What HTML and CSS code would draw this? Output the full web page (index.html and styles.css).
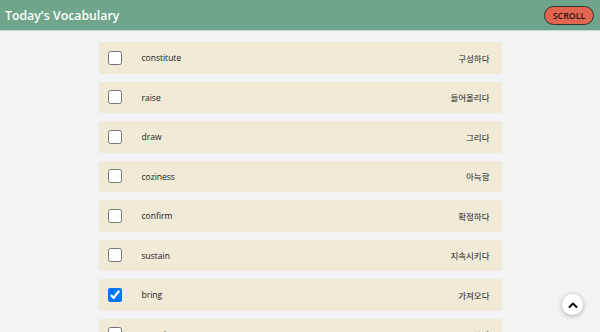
FILE: index.html
```html
<!DOCTYPE html>
<html lang="en">
<head>
<meta charset="utf-8">
<title>Today's Vocabulary</title>
<link rel="stylesheet" href="styles.css">
</head>
<body>
<header class="topbar">
  <h1 class="title">Today's Vocabulary</h1>
  <button class="scroll-btn">SCROLL</button>
</header>
<main class="list">
  <div class="item"><input type="checkbox" class="check"><span class="word">constitute</span><span class="meaning">구성하다</span></div>
  <div class="item"><input type="checkbox" class="check"><span class="word">raise</span><span class="meaning">들어올리다</span></div>
  <div class="item"><input type="checkbox" class="check"><span class="word">draw</span><span class="meaning">그리다</span></div>
  <div class="item"><input type="checkbox" class="check"><span class="word">coziness</span><span class="meaning">아늑함</span></div>
  <div class="item"><input type="checkbox" class="check"><span class="word">confirm</span><span class="meaning">확정하다</span></div>
  <div class="item"><input type="checkbox" class="check"><span class="word">sustain</span><span class="meaning">지속시키다</span></div>
  <div class="item"><input type="checkbox" class="check" checked><span class="word">bring</span><span class="meaning">가져오다</span></div>
  <div class="item"><input type="checkbox" class="check"><span class="word">spend</span><span class="meaning">쓰다</span></div>
</main>
<button class="to-top" aria-label="Scroll to top">
  <svg width="12" height="12" viewBox="0 0 12 12"><path d="M2.5 8 L6 4.5 L9.5 8" fill="none" stroke="#111" stroke-width="2" stroke-linecap="round" stroke-linejoin="round"/></svg>
</button>
</body>
</html>
```
FILE: styles.css
```css
html, body {
  margin: 0;
  padding: 0;
  height: 100%;
  overflow: hidden;
}
body {
  background: #f2f3f5;
  font-family: "Open Sans", "Noto Sans CJK KR", sans-serif;
}
.topbar {
  height: 31px;
  background: #6fa58a;
  border-bottom: 1px solid #c3dacd;
  display: flex;
  align-items: center;
  justify-content: space-between;
  padding: 0 6px 0 5px;
  box-sizing: border-box;
}
.title {
  margin: 0;
  color: #ffffff;
  font-size: 12.3px;
  font-weight: 600;
}
.scroll-btn {
  height: 19px;
  width: 50px;
  padding: 0;
  border: 1px solid #333333;
  border-radius: 10px;
  background: #e2664f;
  color: #231512;
  font-family: "Open Sans", sans-serif;
  font-size: 8.8px;
  font-weight: 600;
  margin-top: 1px;
}
.list {
  width: 403px;
  margin: 11px auto 0;
  display: flex;
  flex-direction: column;
  gap: 8px;
}
.item {
  height: 31.5px;
  background: #f0ead6;
  border-radius: 2px;
  display: flex;
  align-items: center;
  padding: 0 12px 0 9px;
  box-sizing: border-box;
  flex-shrink: 0;
}
.check {
  width: 14px;
  height: 14px;
  margin: 0;
}
.word {
  margin-left: 20px;
  font-size: 8.5px;
  font-weight: 500;
  color: #1a1a1a;
  flex: 1;
}
.meaning {
  font-family: "Noto Sans CJK KR", sans-serif;
  font-size: 8.5px;
  color: #1a1a1a;
}
.to-top {
  position: fixed;
  left: 562px;
  top: 294px;
  width: 21px;
  height: 21px;
  border-radius: 50%;
  border: none;
  background: #ffffff;
  box-shadow: 0 1px 5px rgba(0,0,0,0.3);
  display: flex;
  align-items: center;
  justify-content: center;
  padding: 0;
}
```
